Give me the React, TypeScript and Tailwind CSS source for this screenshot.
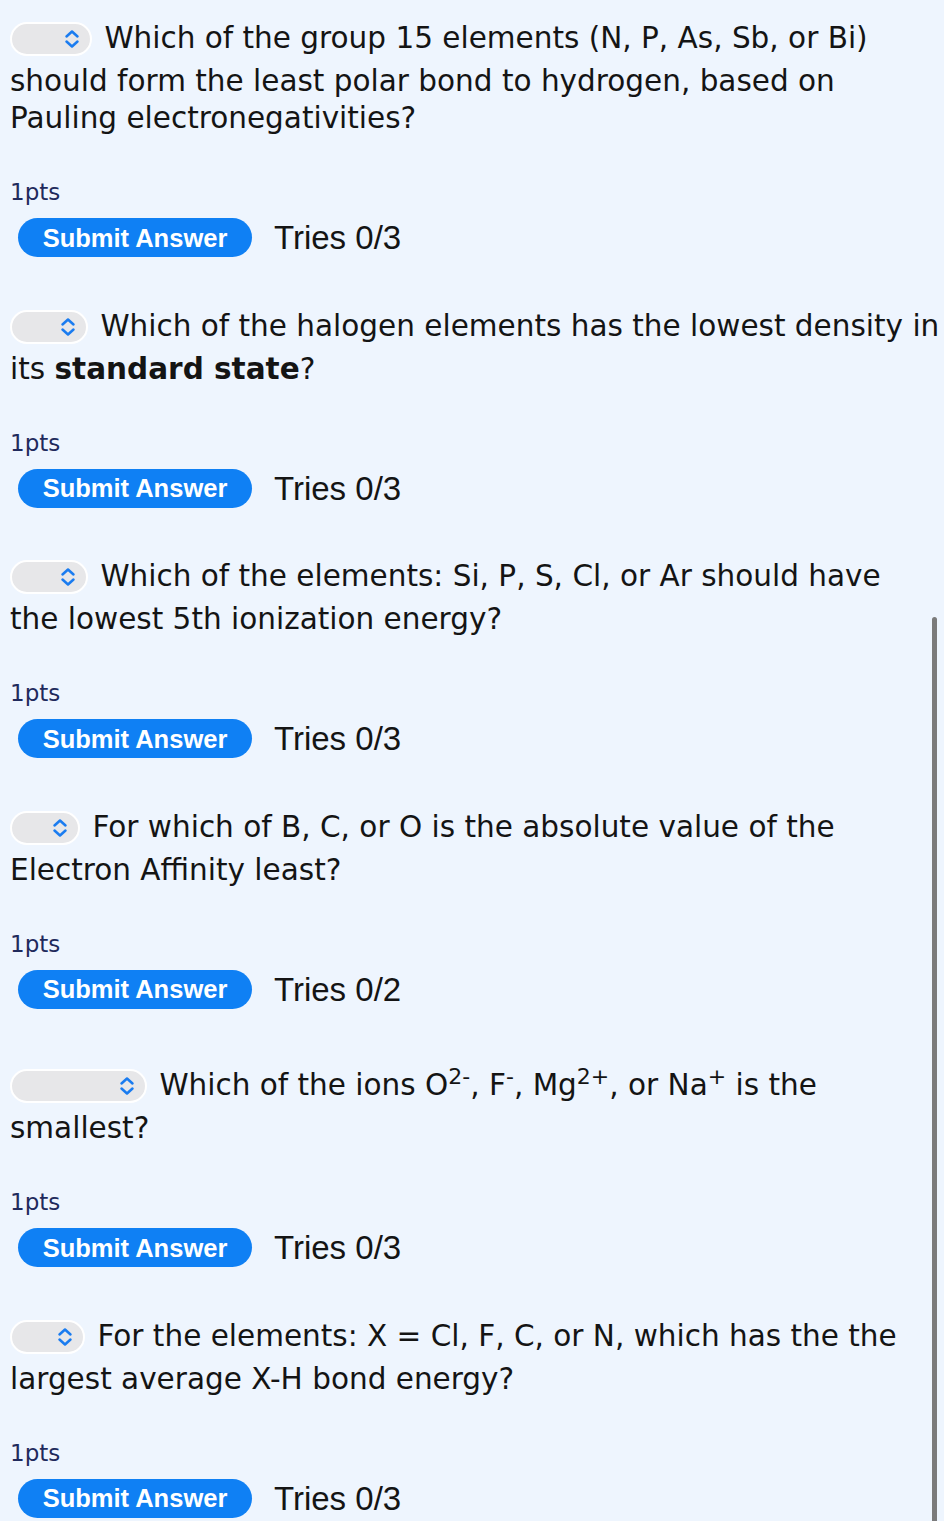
import React from "react";

function Chevron() {
  return (
    <svg width="18" height="20" viewBox="0 0 18 20" fill="none" stroke="#1a7cf0" strokeWidth="2.5" strokeLinecap="round" strokeLinejoin="round">
      <path d="M3.5 7.5 L9 2.5 L14.5 7.5" />
      <path d="M3.5 12.5 L9 17.5 L14.5 12.5" />
    </svg>
  );
}

function Select({ w }: { w: string }) {
  return (
    <span
      className={`inline-flex items-center justify-end align-middle h-[34px] my-[7px] mr-[3px] rounded-full bg-[#e7e7e9] border-2 border-white pr-[9px] ${w}`}
    >
      <Chevron />
    </span>
  );
}

function Block({ w, children, tries, extra = "" }: { w: string; children: React.ReactNode; tries: string; extra?: string }) {
  return (
    <div className={`mb-[40px] ${extra}`}>
      <p className="text-[29.5px] leading-[37px] text-[#141414] whitespace-nowrap">
        <Select w={w} /> {children}
      </p>
      <div className="mt-[40px] text-[23px] leading-[30px] text-[#1f2a5c]">1pts</div>
      <div className="mt-[6px] flex items-center">
        <div className="ml-[8px] w-[234px] h-[39px] rounded-full bg-[#0f80f4] flex items-center justify-center text-white font-bold text-[25.5px] font-['Liberation_Sans',Arial,sans-serif]">
          Submit Answer
        </div>
        <div className="ml-[22px] text-[33px] text-[#141414] font-['Liberation_Sans',Arial,sans-serif]">{tries}</div>
      </div>
    </div>
  );
}

const supCls = "text-[22px]";

export default function App() {
  return (
    <div className="relative w-[944px] h-[1521px] overflow-hidden bg-[#eef5fe] font-['DejaVu_Sans','Verdana',sans-serif]">
      <div className="pl-[10px] pr-[4px] pt-[15px]">
        <Block w="w-[82px]" tries="Tries 0/3">
          Which of the group 15 elements (N, P, As, Sb, or Bi)
          <br />
          should form the least polar bond to hydrogen, based on
          <br />
          Pauling electronegativities?
        </Block>
        <Block w="w-[78px]" tries="Tries 0/3">
          Which of the halogen elements has the lowest density in
          <br />
          its <b>standard state</b>?
        </Block>
        <Block w="w-[78px]" tries="Tries 0/3">
          Which of the elements: Si, P, S, Cl, or Ar should have
          <br />
          the lowest 5th ionization energy?
        </Block>
        <Block w="w-[70px]" tries="Tries 0/2">
          For which of B, C, or O is the absolute value of the
          <br />
          Electron Affinity least?
        </Block>
        <Block w="w-[137px]" tries="Tries 0/3" extra="pt-[8px]">
          Which of the ions O<sup className={supCls}>2-</sup>, F<sup className={supCls}>-</sup>, Mg<sup className={supCls}>2+</sup>, or Na<sup className={supCls}>+</sup> is the
          <br />
          smallest?
        </Block>
        <Block w="w-[75px]" tries="Tries 0/3">
          For the elements: X = Cl, F, C, or N, which has the the
          <br />
          largest average X-H bond energy?
        </Block>
      </div>
      <div className="absolute left-[932px] top-[617px] w-[5px] h-[920px] rounded-full bg-[#7b7b7b]" />
    </div>
  );
}
